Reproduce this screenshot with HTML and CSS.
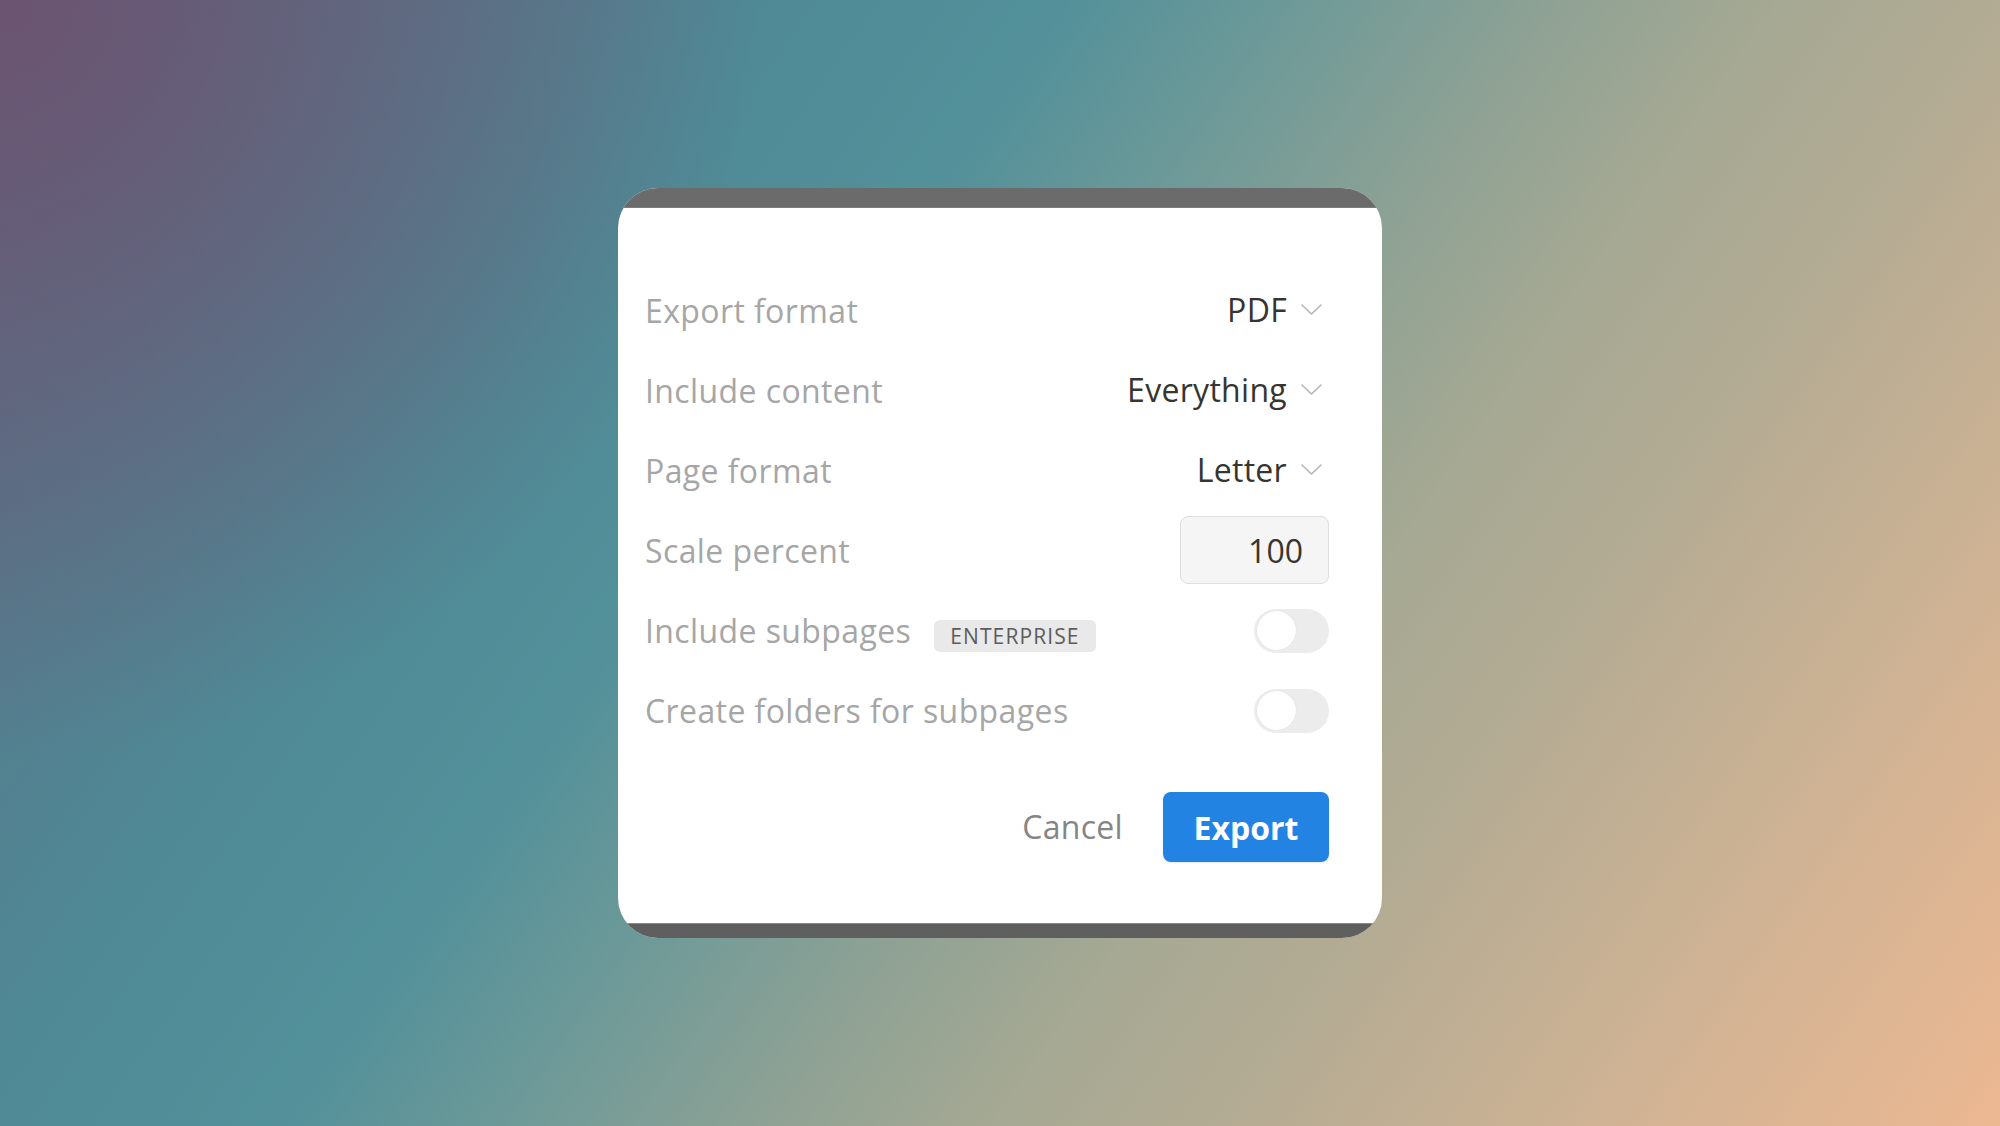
FILE: index.html
```html
<!DOCTYPE html>
<html lang="en">
<head>
<meta charset="utf-8">
<title>Export</title>
<link rel="stylesheet" href="styles.css">
</head>
<body>
<div class="dialog">
  <div class="bar bar-top"></div>
  <div class="content">
    <div class="row">
      <span class="label">Export format</span>
      <div class="select"><span class="value">PDF</span><svg class="chev" viewBox="0 0 21 11" width="21" height="11"><polyline points="1,1 10.5,10 20,1"/></svg></div>
    </div>
    <div class="row">
      <span class="label">Include content</span>
      <div class="select"><span class="value">Everything</span><svg class="chev" viewBox="0 0 21 11" width="21" height="11"><polyline points="1,1 10.5,10 20,1"/></svg></div>
    </div>
    <div class="row">
      <span class="label">Page format</span>
      <div class="select"><span class="value">Letter</span><svg class="chev" viewBox="0 0 21 11" width="21" height="11"><polyline points="1,1 10.5,10 20,1"/></svg></div>
    </div>
    <div class="row">
      <span class="label">Scale percent</span>
      <input class="num" type="text" value="100">
    </div>
    <div class="row">
      <div class="label-group"><span class="label">Include subpages</span><span class="badge">ENTERPRISE</span></div>
      <div class="toggle"><div class="knob"></div></div>
    </div>
    <div class="row">
      <span class="label">Create folders for subpages</span>
      <div class="toggle"><div class="knob"></div></div>
    </div>
    <div class="footer">
      <button class="btn-cancel">Cancel</button>
      <button class="btn-export">Export</button>
    </div>
  </div>
  <div class="bar bar-bottom"></div>
</div>
</body>
</html>
```

FILE: styles.css
```css
* { box-sizing: border-box; }

html, body {
  margin: 0;
  height: 100%;
}

body {
  display: flex;
  align-items: center;
  justify-content: center;
  font-family: "Open Sans", "Noto Sans", sans-serif;
  background:
    radial-gradient(circle at 0 0, rgba(108, 82, 112, 0.95) 0, rgba(108, 82, 112, 0) 760px),
    linear-gradient(125deg, #5a6d84 0%, #4f8a96 28%, #52909a 38%, #6f9a98 47%, #8fa294 56%, #a6a993 64%, #b3ab93 72%, #d0b394 86%, #ecb892 100%);
}

.dialog {
  width: 764px;
  height: 750px;
  background: #ffffff;
  border-radius: 40px;
  overflow: hidden;
  display: flex;
  flex-direction: column;
}

.bar {
  flex: none;
}

.bar-top {
  height: 20px;
  background: #6b6b6b;
  border-bottom: 1px solid #7d7d7d;
}

.bar-bottom {
  height: 15px;
  background: #5f5f5f;
  border-top: 1px solid #8a8a8a;
}

.content {
  flex: 1;
  padding: 65px 53px 0 27px;
  display: flex;
  flex-direction: column;
}

.row {
  height: 80px;
  display: flex;
  align-items: center;
  justify-content: space-between;
}

.label {
  font-size: 32px;
  letter-spacing: 0.4px;
  color: #a6a6a6;
  white-space: nowrap;
  margin-bottom: 5px;
}

.label-group {
  display: flex;
  align-items: center;
  gap: 23px;
}

.badge {
  font-size: 21px;
  letter-spacing: 1.1px;
  color: #5c5c5c;
  background: #e9e9e9;
  border-radius: 6px;
  height: 32px;
  padding: 0 16px;
  display: flex;
  align-items: center;
  margin-top: 5px;
}

.select {
  display: flex;
  align-items: center;
  gap: 14px;
  padding-right: 7px;
  margin-bottom: 7px;
}

.value {
  font-size: 32px;
  letter-spacing: 0.3px;
  color: #37352f;
}

.chev {
  display: block;
  fill: none;
  stroke: #b5b5b5;
  stroke-width: 1.6;
  stroke-linecap: round;
  stroke-linejoin: round;
}

.num {
  width: 149px;
  height: 68px;
  border: 1.5px solid #dedede;
  border-radius: 8px;
  background: #f5f5f5;
  font-family: "Open Sans", "Noto Sans", sans-serif;
  font-size: 32px;
  color: #37352f;
  text-align: right;
  padding: 0 25px 0 10px;
  margin-bottom: 6px;
  outline: none;
}

.toggle {
  width: 75px;
  height: 44px;
  border-radius: 22px;
  background: #ececec;
  padding: 2.5px;
  display: flex;
  align-items: center;
  margin-bottom: 5px;
}

.knob {
  width: 39px;
  height: 39px;
  border-radius: 50%;
  background: #ffffff;
  box-shadow: 0 0 1px rgba(0, 0, 0, 0.12);
}

.footer {
  margin-top: 39px;
  display: flex;
  justify-content: flex-end;
  align-items: center;
  gap: 40px;
}

.btn-cancel {
  background: none;
  border: none;
  padding: 0;
  font-family: "Open Sans", "Noto Sans", sans-serif;
  font-size: 32px;
  letter-spacing: 0.3px;
  color: #858585;
  margin-bottom: 2px;
}

.btn-export {
  width: 166px;
  height: 70px;
  border: none;
  border-radius: 8px;
  background: #2383e2;
  color: #ffffff;
  font-family: "Open Sans", "Noto Sans", sans-serif;
  font-size: 32px;
  font-weight: 700;
  box-shadow: 0 1px 2px rgba(15, 15, 15, 0.1);
}
```
